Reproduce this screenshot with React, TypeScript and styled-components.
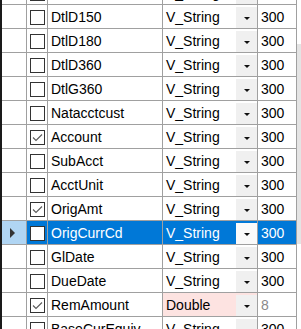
import React from 'react';
import styled, { createGlobalStyle } from 'styled-components';

const GlobalStyle = createGlobalStyle`
    html, body {
        margin: 0;
        padding: 0;
        background: #ffffff;
    }
    body {
        font-family: "Liberation Sans", Arial, sans-serif;
    }
`;

const GRID = '#a0a0a0';
const SELECTED = '#0078d7';

type Field = {
    name: string;
    checked: boolean;
    type: string;
    size: string;
    selected?: boolean;
    invalid?: boolean;
};

const fields: Field[] = [
    { name: 'DtlD120', checked: false, type: 'V_String', size: '300' },
    { name: 'DtlD150', checked: false, type: 'V_String', size: '300' },
    { name: 'DtlD180', checked: false, type: 'V_String', size: '300' },
    { name: 'DtlD360', checked: false, type: 'V_String', size: '300' },
    { name: 'DtlG360', checked: false, type: 'V_String', size: '300' },
    { name: 'Natacctcust', checked: false, type: 'V_String', size: '300' },
    { name: 'Account', checked: true, type: 'V_String', size: '300' },
    { name: 'SubAcct', checked: false, type: 'V_String', size: '300' },
    { name: 'AcctUnit', checked: false, type: 'V_String', size: '300' },
    { name: 'OrigAmt', checked: true, type: 'V_String', size: '300' },
    { name: 'OrigCurrCd', checked: false, type: 'V_String', size: '300', selected: true },
    { name: 'GlDate', checked: false, type: 'V_String', size: '300' },
    { name: 'DueDate', checked: false, type: 'V_String', size: '300' },
    { name: 'RemAmount', checked: true, type: 'Double', size: '8', invalid: true },
    { name: 'BaseCurEquiv', checked: false, type: 'V_String', size: '300' },
];

const GridFrame = styled.div`
    display: flex;
    width: 301px;
    height: 329px;
    overflow: hidden;
    background: #ffffff;
`;

const Table = styled.div`
    display: flex;
    flex-direction: column;
    width: 296px;
    border-left: 2px solid #1a1a1a;
    border-right: 1px solid ${GRID};
    overflow: hidden;
`;

// first row is scrolled mostly out of view
const Rows = styled.div`
    display: flex;
    flex-direction: column;
    margin-top: -19px;
`;

const Row = styled.div`
    display: grid;
    grid-template-columns: 25px 21px 115px 95px 39px;
    height: 24px;
    flex-shrink: 0;
`;

const Cell = styled.div<{ $selected?: boolean }>`
    box-sizing: border-box;
    height: 24px;
    border-bottom: 1px solid ${GRID};
    border-right: 1px solid ${GRID};
    background: ${p => (p.$selected ? SELECTED : '#ffffff')};
    display: flex;
    align-items: center;
    overflow: hidden;
`;

const HeaderCell = styled(Cell)`
    background: ${p => (p.$selected ? '#b0d5f3' : '#ffffff')};
    padding-left: 8px;
`;

const LastCell = styled(Cell)`
    border-right: none;
`;

const Arrow = styled.div`
    width: 0;
    height: 0;
    border-top: 5px solid transparent;
    border-bottom: 5px solid transparent;
    border-left: 5px solid #333333;
    margin-top: 1px;
`;

const CheckCell = styled(Cell)`
    justify-content: center;
    padding-top: 1px;
`;

const Box = styled.div`
    box-sizing: border-box;
    width: 15px;
    height: 15px;
    border: 1px solid #333333;
    background: #ffffff;
    display: flex;
    align-items: center;
    justify-content: center;
`;

const Text = styled.span<{ $selected?: boolean; $muted?: boolean }>`
    font-size: 14px;
    line-height: 23px;
    padding-left: 3px;
    padding-top: 1px;
    white-space: nowrap;
    color: ${p => (p.$selected ? '#ffffff' : p.$muted ? '#8a8a8a' : '#000000')};
`;

const TypeCell = styled(Cell)<{ $invalid?: boolean }>`
    background: ${p => (p.$selected ? SELECTED : p.$invalid ? '#fde3e1' : '#ffffff')};
    justify-content: space-between;
`;

const DropButton = styled.div<{ $selected?: boolean }>`
    width: 21px;
    height: 21px;
    margin-top: 1px;
    background: ${p => (p.$selected ? '#fafafa' : '#f0f0f0')};
    display: flex;
    align-items: center;
    justify-content: center;
    flex-shrink: 0;
`;

const DropArrow = styled.div`
    width: 0;
    height: 0;
    border-left: 3px solid transparent;
    border-right: 3px solid transparent;
    border-top: 3px solid #111111;
    margin-top: 2px;
`;

const ScrollTrack = styled.div`
    width: 4px;
    height: 100%;
    display: flex;
    flex-direction: column;
    background: #ffffff;
`;

const ScrollThumb = styled.div`
    margin-top: 44px;
    height: 200px;
    background: #e4e4e4;
`;

const CheckMark = () => (
    <svg width="11" height="9" viewBox="0 0 11 9">
        <polyline points="1,4.5 4,7.5 10,1.5" fill="none" stroke="#5a5a5a" strokeWidth="1.1" />
    </svg>
);

const FieldRow = ({ field }: { field: Field }) => {
    const sel = !!field.selected;
    return (
        <Row>
            <HeaderCell $selected={sel}>{sel && <Arrow />}</HeaderCell>
            <CheckCell $selected={sel}>
                <Box>{field.checked && <CheckMark />}</Box>
            </CheckCell>
            <Cell $selected={sel}>
                <Text $selected={sel}>{field.name}</Text>
            </Cell>
            <TypeCell $selected={sel} $invalid={field.invalid}>
                <Text $selected={sel}>{field.type}</Text>
                <DropButton $selected={sel}>
                    <DropArrow />
                </DropButton>
            </TypeCell>
            <LastCell $selected={sel}>
                <Text $selected={sel} $muted={field.invalid}>{field.size}</Text>
            </LastCell>
        </Row>
    );
};

const App = () => {
    return (
        <>
            <GlobalStyle />
            <GridFrame>
                <Table>
                    <Rows>
                        {fields.map(f => (
                            <FieldRow key={f.name} field={f} />
                        ))}
                    </Rows>
                </Table>
                <ScrollTrack>
                    <ScrollThumb />
                </ScrollTrack>
            </GridFrame>
        </>
    );
};

export default App;
